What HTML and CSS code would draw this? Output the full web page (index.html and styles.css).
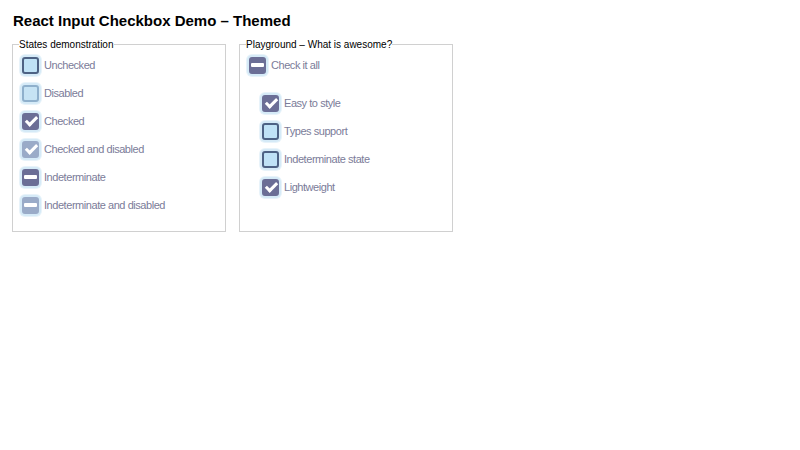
FILE: index.html
```html
<!DOCTYPE html>
<html lang="en">
<head>
  <meta charset="UTF-8">
  <meta name="viewport" content="width=device-width, initial-scale=1.0">
  <title>React Input Checkbox Demo – Themed</title>
  <link rel="stylesheet" href="styles.css">
</head>
<body>
  <h1>React Input Checkbox Demo – Themed</h1>
  <div class="demo">
    <fieldset>
      <legend>States demonstration</legend>
      <label class="option">
        <span class="box"></span>
        <span class="text">Unchecked</span>
      </label>
      <label class="option">
        <span class="box disabled"></span>
        <span class="text">Disabled</span>
      </label>
      <label class="option">
        <span class="box checked"></span>
        <span class="text">Checked</span>
      </label>
      <label class="option">
        <span class="box checked disabled"></span>
        <span class="text">Checked and disabled</span>
      </label>
      <label class="option">
        <span class="box mixed"></span>
        <span class="text">Indeterminate</span>
      </label>
      <label class="option">
        <span class="box mixed disabled"></span>
        <span class="text">Indeterminate and disabled</span>
      </label>
    </fieldset>

    <fieldset>
      <legend>Playground – What is awesome?</legend>
      <label class="option">
        <span class="box mixed"></span>
        <span class="text">Check it all</span>
      </label>
      <div class="children">
        <label class="option">
          <span class="box checked"></span>
          <span class="text">Easy to style</span>
        </label>
        <label class="option">
          <span class="box"></span>
          <span class="text">Types support</span>
        </label>
        <label class="option">
          <span class="box"></span>
          <span class="text">Indeterminate state</span>
        </label>
        <label class="option">
          <span class="box checked"></span>
          <span class="text">Lightweight</span>
        </label>
      </div>
    </fieldset>
  </div>
</body>
</html>
```

FILE: styles.css
```css
/* Page */
body {
  font-family: "Liberation Sans", Arial, sans-serif;
  margin: 0;
  padding: 12px 12px;
  color: #000;
}
h1 {
  font-size: 15px;
  margin: 0 0 10px 1px;
}
.demo {
  display: flex;
  gap: 13px;
  align-items: flex-start;
}
fieldset {
  width: 214px;
  height: 193px;
  box-sizing: border-box;
  margin: 0;
  padding: 1px 8px 0;
  border: 1px solid #d0d0d0;
}
legend {
  font-size: 10px;
  padding: 0;
  margin-left: -2px;
}

/* Checkbox rows */
.option {
  display: flex;
  align-items: center;
  gap: 5px;
  height: 28px;
  cursor: pointer;
}
.text {
  font-size: 11px;
  letter-spacing: -0.45px;
  color: #7b7c99;
}
.children {
  margin-top: 10px;
  padding-left: 13px;
}

/* Themed box with a soft halo */
.box {
  position: relative;
  width: 13px;
  height: 13px;
  margin-left: 1px;
  border: 2px solid #4d6284;
  border-radius: 3px;
  background: #bfe2f6;
  box-shadow: 0 0 0 2px #d5eaf7, 0 0 0 3px #e8f3fa;
  flex: none;
}
.box.checked,
.box.mixed {
  background: #6b6e96;
  border-color: #6b6e96;
}
.box.disabled {
  border-color: #8fb0cc;
  background: #c6e3f4;
}
.box.checked.disabled,
.box.mixed.disabled {
  background: #9aabc8;
  border-color: #9aabc8;
}
.box.checked::after {
  content: "";
  position: absolute;
  left: 4px;
  top: -1px;
  width: 4px;
  height: 9px;
  border: solid #fff;
  border-width: 0 3px 3px 0;
  transform: rotate(45deg);
}
.box.mixed::after {
  content: "";
  position: absolute;
  left: 0;
  right: 0;
  top: 4px;
  height: 4px;
  border-radius: 1px;
  background: #fff;
}
```
